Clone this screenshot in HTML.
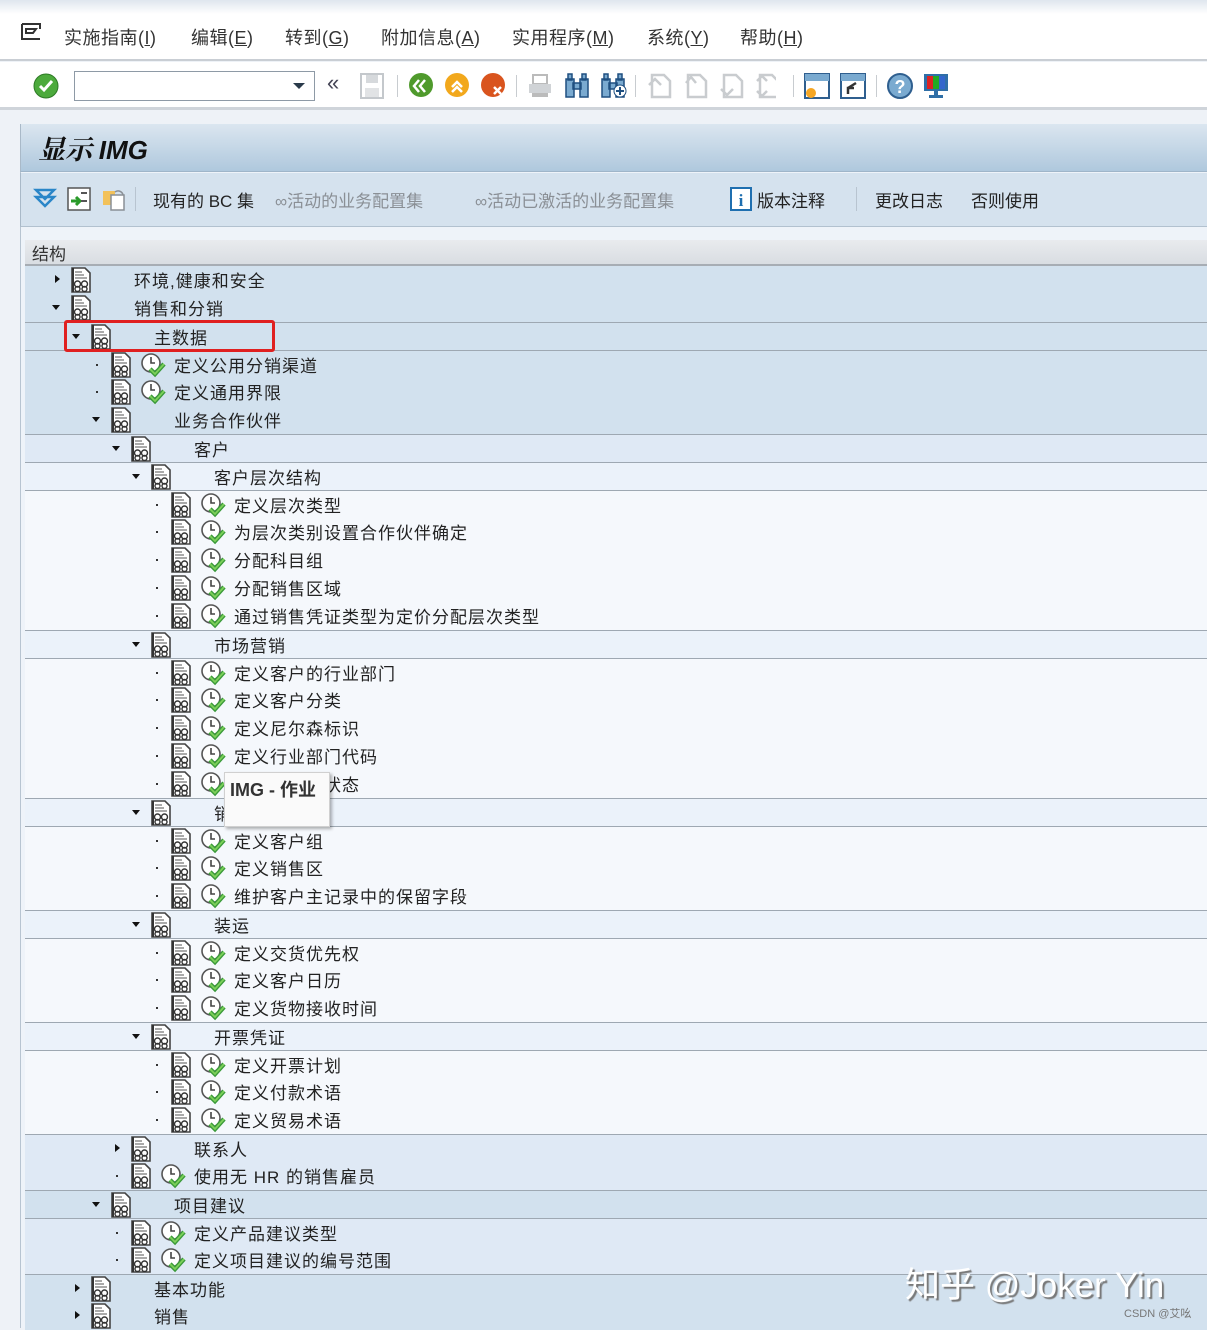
<!DOCTYPE html>
<html><head><meta charset="utf-8">
<style>
*{margin:0;padding:0;box-sizing:border-box}
body{width:1207px;height:1328px;overflow:hidden;background:#eef2f7;font-family:"Liberation Sans","Noto Sans CJK SC",sans-serif;position:relative;color:#222}
.abs{position:absolute}
#menu{left:0;top:0;width:1207px;height:61px;background:linear-gradient(#dfe6ee 0,#fff 14px,#fff 100%);border-bottom:2px solid #c9ced4}
#menu span{position:absolute;top:24px;font-size:18px;color:#333;letter-spacing:0.5px}
#tb{left:0;top:62px;width:1207px;height:48px;background:#fff;border-bottom:3px solid #cfd4da}
#panel{left:20px;top:124px;width:1187px;height:1204px;background:#eef3f9;border-left:1px solid #b7c4d1;border-top:1px solid #b7c4d1}
#title{left:20px;top:124px;width:1187px;height:48px;background:linear-gradient(#dbe6f0,#afc8dd);border-bottom:1px solid #9fb5c9;border-left:1px solid #a9b9c8}
#title span{position:absolute;left:17px;top:4px;font-size:27px;font-style:italic;font-weight:bold;color:#111;font-family:"Liberation Serif","Noto Serif CJK SC",serif}
#title b{font-family:"Liberation Sans",sans-serif;font-size:26px}
#act{left:20px;top:173px;width:1187px;height:54px;background:#d5e2ee;border-bottom:1px solid #b2c1cf;border-left:1px solid #a9b9c8}
#act span{position:absolute;top:14px;font-size:17px;color:#222}
#act .g{color:#8a8f95}
#hdr{left:25px;top:240px;width:1182px;height:26px;background:linear-gradient(#e9ebee,#d9dde2);border-bottom:2px solid #a7adb4}
#hdr span{position:absolute;left:7px;top:0px;font-size:17px;color:#333}
.r{position:absolute;left:25px;width:1182px;height:28px}
.r.bt{border-top:1px solid #9ea8b2}
.d0,.d1,.d2{background:#d2e1ee}.d3{background:#dfe9f5}.d4{background:#ebf2fa}.d5{background:#f5f8fc}
.r .x{position:absolute;top:1px;font-size:17px;color:#222;letter-spacing:1px;white-space:nowrap}
.r svg{position:absolute}
.tri{position:absolute;width:0;height:0}
.e{border-left:4px solid transparent;border-right:4px solid transparent;border-top:5px solid #111;top:11px}
.c{border-top:4px solid transparent;border-bottom:4px solid transparent;border-left:5px solid #111;top:9px}
.dot{position:absolute;width:2px;height:2px;background:#333;top:13px}
</style></head><body>
<svg width="0" height="0" style="position:absolute">
<defs>
<symbol id="doc" viewBox="0 0 24 26"><path d="M2 1h13l5 5v19H2z" fill="#fff" stroke="#444" stroke-width="1.6"/><path d="M5 5h7M5 8h9M5 11h12" stroke="#777" stroke-width="1.2"/><rect x="2" y="1" width="2" height="24" fill="#333"/><circle cx="7.5" cy="17" r="3" fill="none" stroke="#333" stroke-width="1.4"/><circle cx="14.5" cy="17" r="3" fill="none" stroke="#333" stroke-width="1.4"/><circle cx="7.5" cy="22" r="2.5" fill="none" stroke="#333" stroke-width="1.4"/><circle cx="14.5" cy="22" r="2.5" fill="none" stroke="#333" stroke-width="1.4"/></symbol>
<symbol id="clk" viewBox="0 0 26 26"><circle cx="11" cy="11" r="9" fill="#fff" stroke="#555" stroke-width="1.6"/><path d="M11 5v6h4" fill="none" stroke="#444" stroke-width="1.6"/><path d="M10 17l5 5 9-10" fill="none" stroke="#3a9a3a" stroke-width="4.5"/><path d="M10 17l5 5 9-10" fill="none" stroke="#7ed05a" stroke-width="1.8"/></symbol>
</defs></svg>

<div id="menu" class="abs">
<svg style="position:absolute;left:20px;top:22px" width="24" height="20"><path d="M2 2h18v5M2 2v15h18M6 7h10l-3 4H6z" fill="none" stroke="#333" stroke-width="2"/></svg>
<span style="left:64px">实施指南(<u>I</u>)</span>
<span style="left:191px">编辑(<u>E</u>)</span>
<span style="left:285px">转到(<u>G</u>)</span>
<span style="left:381px">附加信息(<u>A</u>)</span>
<span style="left:512px">实用程序(<u>M</u>)</span>
<span style="left:647px">系统(<u>Y</u>)</span>
<span style="left:740px">帮助(<u>H</u>)</span>
</div>

<div id="tb" class="abs">
<svg style="position:absolute;left:32px;top:10px" width="28" height="28"><circle cx="14" cy="14" r="12" fill="#4caa3c" stroke="#2d7a25"/><path d="M8 14l4 4 8-9" fill="none" stroke="#fff" stroke-width="3"/></svg>
<div style="position:absolute;left:74px;top:9px;width:241px;height:30px;border:1px solid #8e9aa6;background:#fff"><div class="tri e" style="left:218px;top:11px;border-left-width:6px;border-right-width:6px;border-top-width:6px;border-top-color:#2a3a4a"></div></div>
<span style="position:absolute;left:327px;top:8px;font-size:22px;color:#445">«</span>
<svg style="position:absolute;left:359px;top:10px" width="28" height="28"><rect x="2" y="2" width="22" height="24" fill="none" stroke="#c4c8cc" stroke-width="2"/><rect x="7" y="3" width="12" height="8" fill="#d6d9dc"/><rect x="6" y="16" width="14" height="9" fill="#e1e3e5"/></svg>
<div style="position:absolute;left:397px;top:13px;width:1px;height:22px;background:#c8ccd0"></div>
<svg style="position:absolute;left:407px;top:9px" width="30" height="30"><circle cx="14" cy="14" r="12" fill="#4f9a2c"/><path d="M18 9l-5 6 5 6M12 9l-5 6 5 6" fill="none" stroke="#fff" stroke-width="2.5"/></svg>
<svg style="position:absolute;left:443px;top:9px" width="30" height="30"><circle cx="14" cy="14" r="12" fill="#f2a81c"/><path d="M9 16l5-5 5 5M9 21l5-5 5 5" fill="none" stroke="#fff" stroke-width="2.5"/></svg>
<svg style="position:absolute;left:479px;top:9px" width="30" height="30"><circle cx="14" cy="14" r="12" fill="#d9541e"/><path d="M15 16l7 7M22 16l-7 7" stroke="#fff" stroke-width="2.5"/></svg>
<div style="position:absolute;left:516px;top:13px;width:1px;height:22px;background:#c8ccd0"></div>
<svg style="position:absolute;left:526px;top:10px" width="28" height="28"><rect x="7" y="3" width="14" height="9" fill="none" stroke="#bbb" stroke-width="2"/><rect x="3" y="12" width="22" height="9" fill="#d0d3d6"/><rect x="6" y="21" width="16" height="4" fill="#bbb"/></svg>
<svg style="position:absolute;left:563px;top:9px" width="28" height="30"><path d="M3 8h8v18H3zM17 8h8v18h-8zM5 3h4v6H5zM19 3h4v6h-4zM10 12h8v6h-8z" fill="#7aaad0" stroke="#1f4f80" stroke-width="1.5"/></svg>
<svg style="position:absolute;left:599px;top:9px" width="28" height="30"><path d="M3 8h8v18H3zM17 8h8v18h-8zM5 3h4v6H5zM19 3h4v6h-4zM10 12h8v6h-8z" fill="#7aaad0" stroke="#1f4f80" stroke-width="1.5"/><circle cx="21" cy="20" r="6" fill="#fff" stroke="#1f4f80"/><path d="M21 16v8M17 20h8" stroke="#1f4f80" stroke-width="2"/></svg>
<div style="position:absolute;left:635px;top:13px;width:1px;height:22px;background:#c8ccd0"></div>
<svg style="position:absolute;left:646px;top:9px" width="130" height="30"><g fill="none" stroke="#c9cccf" stroke-width="2.5"><path d="M6 4h12l6 6v16H6zM3 14l6-6 6 6"/><path d="M42 4h12l6 6v16H42zM40 12l5-6 5 6"/><path d="M78 4h12l6 6v16H78zM75 18l6 6 6-6"/><path d="M114 4h12l6 6v16h-18zM111 10l5-5 5 5M111 20l5 5 5-5"/></g></svg>
<div style="position:absolute;left:793px;top:13px;width:1px;height:22px;background:#c8ccd0"></div>
<svg style="position:absolute;left:803px;top:10px" width="28" height="28"><rect x="2" y="2" width="24" height="24" fill="#fff" stroke="#2f5f8f" stroke-width="2"/><rect x="2" y="2" width="24" height="7" fill="#7aaad0"/><circle cx="8" cy="21" r="5" fill="#f5a623"/></svg>
<svg style="position:absolute;left:839px;top:10px" width="28" height="28"><rect x="2" y="2" width="24" height="24" fill="#fff" stroke="#2f5f8f" stroke-width="2"/><rect x="2" y="2" width="24" height="7" fill="#7aaad0"/><path d="M9 22v-6h6M9 16l8-5" stroke="#333" stroke-width="2.5" fill="none"/></svg>
<div style="position:absolute;left:876px;top:13px;width:1px;height:22px;background:#c8ccd0"></div>
<svg style="position:absolute;left:886px;top:9px" width="30" height="30"><circle cx="14" cy="15" r="12" fill="#7aaad0" stroke="#2f5f8f" stroke-width="2"/><text x="14" y="22" font-size="18" font-weight="bold" fill="#fff" text-anchor="middle" font-family="Liberation Sans">?</text></svg>
<svg style="position:absolute;left:922px;top:9px" width="30" height="30"><rect x="2" y="3" width="24" height="17" fill="#2f6fa7"/><rect x="5" y="5" width="6" height="13" fill="#d22"/><rect x="11" y="5" width="6" height="13" fill="#2a2"/><rect x="17" y="5" width="6" height="13" fill="#36c"/><rect x="12" y="20" width="4" height="4" fill="#2f6fa7"/><rect x="7" y="24" width="14" height="3" fill="#2f6fa7"/></svg>
</div>

<div id="panel" class="abs"></div>
<div id="title" class="abs"><span>显示 <b>IMG</b></span></div>
<div id="act" class="abs">
<svg style="position:absolute;left:12px;top:13px" width="26" height="26"><path d="M3 4h18l-9 9z M3 11h18l-9 9z" fill="none" stroke="#2a86c8" stroke-width="2.5"/></svg>
<svg style="position:absolute;left:45px;top:13px" width="26" height="26"><rect x="2" y="2" width="22" height="22" fill="#fff" stroke="#555" stroke-width="1.5"/><path d="M5 15h8M10 11l4 4-4 4" stroke="#2a9a2a" stroke-width="3" fill="none"/><path d="M15 7h6M15 15h6" stroke="#555" stroke-width="2"/></svg>
<svg style="position:absolute;left:80px;top:13px" width="26" height="26"><rect x="2" y="5" width="12" height="14" fill="#f2c15a"/><rect x="10" y="9" width="13" height="15" fill="#fff" stroke="#8a8f95" stroke-width="1.5"/><path d="M14 6a5 5 0 0 1 8 3" fill="none" stroke="#8a8f95" stroke-width="1.5"/></svg>
<div style="position:absolute;left:114px;top:14px;width:1px;height:24px;background:#b8c4d0"></div>
<span style="left:132px">现有的 BC 集</span>
<span class="g" style="left:254px">&#8734;活动的业务配置集</span>
<span class="g" style="left:454px">&#8734;活动已激活的业务配置集</span>
<svg style="position:absolute;left:709px;top:14px" width="22" height="24"><rect x="1" y="1" width="20" height="22" fill="#fff" stroke="#1f6fb0" stroke-width="2"/><text x="11" y="19" font-size="17" font-weight="bold" fill="#1f6fb0" text-anchor="middle" font-family="Liberation Serif">i</text></svg>
<span style="left:736px">版本注释</span>
<div style="position:absolute;left:835px;top:14px;width:1px;height:24px;background:#b8c4d0"></div>
<span style="left:854px">更改日志</span>
<span style="left:950px">否则使用</span>
</div>
<div id="hdr" class="abs"><span>结构</span></div>

<div class="r d0" style="top:266px"><div class="tri c" style="left:30px"></div><svg style="left:45px;top:1px" width="24" height="26"><use href="#doc"/></svg><span class="x" style="left:109px">环境,健康和安全</span></div>
<div class="r d0" style="top:294px"><div class="tri e" style="left:27px"></div><svg style="left:45px;top:1px" width="24" height="26"><use href="#doc"/></svg><span class="x" style="left:109px">销售和分销</span></div>
<div class="r d1 bt" style="top:322px"><div class="tri e" style="left:47px"></div><svg style="left:65px;top:1px" width="24" height="26"><use href="#doc"/></svg><span class="x" style="left:129px">主数据</span></div>
<div class="r d2 bt" style="top:350px"><div class="dot" style="left:71px"></div><svg style="left:85px;top:1px" width="24" height="26"><use href="#doc"/></svg><svg style="left:115px;top:1px" width="26" height="26"><use href="#clk"/></svg><span class="x" style="left:149px">定义公用分销渠道</span></div>
<div class="r d2" style="top:378px"><div class="dot" style="left:71px"></div><svg style="left:85px;top:1px" width="24" height="26"><use href="#doc"/></svg><svg style="left:115px;top:1px" width="26" height="26"><use href="#clk"/></svg><span class="x" style="left:149px">定义通用界限</span></div>
<div class="r d2" style="top:406px"><div class="tri e" style="left:67px"></div><svg style="left:85px;top:1px" width="24" height="26"><use href="#doc"/></svg><span class="x" style="left:149px">业务合作伙伴</span></div>
<div class="r d3 bt" style="top:434px"><div class="tri e" style="left:87px"></div><svg style="left:105px;top:1px" width="24" height="26"><use href="#doc"/></svg><span class="x" style="left:169px">客户</span></div>
<div class="r d4 bt" style="top:462px"><div class="tri e" style="left:107px"></div><svg style="left:125px;top:1px" width="24" height="26"><use href="#doc"/></svg><span class="x" style="left:189px">客户层次结构</span></div>
<div class="r d5 bt" style="top:490px"><div class="dot" style="left:131px"></div><svg style="left:145px;top:1px" width="24" height="26"><use href="#doc"/></svg><svg style="left:175px;top:1px" width="26" height="26"><use href="#clk"/></svg><span class="x" style="left:209px">定义层次类型</span></div>
<div class="r d5" style="top:518px"><div class="dot" style="left:131px"></div><svg style="left:145px;top:1px" width="24" height="26"><use href="#doc"/></svg><svg style="left:175px;top:1px" width="26" height="26"><use href="#clk"/></svg><span class="x" style="left:209px">为层次类别设置合作伙伴确定</span></div>
<div class="r d5" style="top:546px"><div class="dot" style="left:131px"></div><svg style="left:145px;top:1px" width="24" height="26"><use href="#doc"/></svg><svg style="left:175px;top:1px" width="26" height="26"><use href="#clk"/></svg><span class="x" style="left:209px">分配科目组</span></div>
<div class="r d5" style="top:574px"><div class="dot" style="left:131px"></div><svg style="left:145px;top:1px" width="24" height="26"><use href="#doc"/></svg><svg style="left:175px;top:1px" width="26" height="26"><use href="#clk"/></svg><span class="x" style="left:209px">分配销售区域</span></div>
<div class="r d5" style="top:602px"><div class="dot" style="left:131px"></div><svg style="left:145px;top:1px" width="24" height="26"><use href="#doc"/></svg><svg style="left:175px;top:1px" width="26" height="26"><use href="#clk"/></svg><span class="x" style="left:209px">通过销售凭证类型为定价分配层次类型</span></div>
<div class="r d4 bt" style="top:630px"><div class="tri e" style="left:107px"></div><svg style="left:125px;top:1px" width="24" height="26"><use href="#doc"/></svg><span class="x" style="left:189px">市场营销</span></div>
<div class="r d5 bt" style="top:658px"><div class="dot" style="left:131px"></div><svg style="left:145px;top:1px" width="24" height="26"><use href="#doc"/></svg><svg style="left:175px;top:1px" width="26" height="26"><use href="#clk"/></svg><span class="x" style="left:209px">定义客户的行业部门</span></div>
<div class="r d5" style="top:686px"><div class="dot" style="left:131px"></div><svg style="left:145px;top:1px" width="24" height="26"><use href="#doc"/></svg><svg style="left:175px;top:1px" width="26" height="26"><use href="#clk"/></svg><span class="x" style="left:209px">定义客户分类</span></div>
<div class="r d5" style="top:714px"><div class="dot" style="left:131px"></div><svg style="left:145px;top:1px" width="24" height="26"><use href="#doc"/></svg><svg style="left:175px;top:1px" width="26" height="26"><use href="#clk"/></svg><span class="x" style="left:209px">定义尼尔森标识</span></div>
<div class="r d5" style="top:742px"><div class="dot" style="left:131px"></div><svg style="left:145px;top:1px" width="24" height="26"><use href="#doc"/></svg><svg style="left:175px;top:1px" width="26" height="26"><use href="#clk"/></svg><span class="x" style="left:209px">定义行业部门代码</span></div>
<div class="r d5" style="top:770px"><div class="dot" style="left:131px"></div><svg style="left:145px;top:1px" width="24" height="26"><use href="#doc"/></svg><svg style="left:175px;top:1px" width="26" height="26"><use href="#clk"/></svg><span class="x" style="left:209px">定义客户的状态</span></div>
<div class="r d4 bt" style="top:798px"><div class="tri e" style="left:107px"></div><svg style="left:125px;top:1px" width="24" height="26"><use href="#doc"/></svg><span class="x" style="left:189px">销售</span></div>
<div class="r d5 bt" style="top:826px"><div class="dot" style="left:131px"></div><svg style="left:145px;top:1px" width="24" height="26"><use href="#doc"/></svg><svg style="left:175px;top:1px" width="26" height="26"><use href="#clk"/></svg><span class="x" style="left:209px">定义客户组</span></div>
<div class="r d5" style="top:854px"><div class="dot" style="left:131px"></div><svg style="left:145px;top:1px" width="24" height="26"><use href="#doc"/></svg><svg style="left:175px;top:1px" width="26" height="26"><use href="#clk"/></svg><span class="x" style="left:209px">定义销售区</span></div>
<div class="r d5" style="top:882px"><div class="dot" style="left:131px"></div><svg style="left:145px;top:1px" width="24" height="26"><use href="#doc"/></svg><svg style="left:175px;top:1px" width="26" height="26"><use href="#clk"/></svg><span class="x" style="left:209px">维护客户主记录中的保留字段</span></div>
<div class="r d4 bt" style="top:910px"><div class="tri e" style="left:107px"></div><svg style="left:125px;top:1px" width="24" height="26"><use href="#doc"/></svg><span class="x" style="left:189px">装运</span></div>
<div class="r d5 bt" style="top:938px"><div class="dot" style="left:131px"></div><svg style="left:145px;top:1px" width="24" height="26"><use href="#doc"/></svg><svg style="left:175px;top:1px" width="26" height="26"><use href="#clk"/></svg><span class="x" style="left:209px">定义交货优先权</span></div>
<div class="r d5" style="top:966px"><div class="dot" style="left:131px"></div><svg style="left:145px;top:1px" width="24" height="26"><use href="#doc"/></svg><svg style="left:175px;top:1px" width="26" height="26"><use href="#clk"/></svg><span class="x" style="left:209px">定义客户日历</span></div>
<div class="r d5" style="top:994px"><div class="dot" style="left:131px"></div><svg style="left:145px;top:1px" width="24" height="26"><use href="#doc"/></svg><svg style="left:175px;top:1px" width="26" height="26"><use href="#clk"/></svg><span class="x" style="left:209px">定义货物接收时间</span></div>
<div class="r d4 bt" style="top:1022px"><div class="tri e" style="left:107px"></div><svg style="left:125px;top:1px" width="24" height="26"><use href="#doc"/></svg><span class="x" style="left:189px">开票凭证</span></div>
<div class="r d5 bt" style="top:1050px"><div class="dot" style="left:131px"></div><svg style="left:145px;top:1px" width="24" height="26"><use href="#doc"/></svg><svg style="left:175px;top:1px" width="26" height="26"><use href="#clk"/></svg><span class="x" style="left:209px">定义开票计划</span></div>
<div class="r d5" style="top:1078px"><div class="dot" style="left:131px"></div><svg style="left:145px;top:1px" width="24" height="26"><use href="#doc"/></svg><svg style="left:175px;top:1px" width="26" height="26"><use href="#clk"/></svg><span class="x" style="left:209px">定义付款术语</span></div>
<div class="r d5" style="top:1106px"><div class="dot" style="left:131px"></div><svg style="left:145px;top:1px" width="24" height="26"><use href="#doc"/></svg><svg style="left:175px;top:1px" width="26" height="26"><use href="#clk"/></svg><span class="x" style="left:209px">定义贸易术语</span></div>
<div class="r d3 bt" style="top:1134px"><div class="tri c" style="left:90px"></div><svg style="left:105px;top:1px" width="24" height="26"><use href="#doc"/></svg><span class="x" style="left:169px">联系人</span></div>
<div class="r d3" style="top:1162px"><div class="dot" style="left:91px"></div><svg style="left:105px;top:1px" width="24" height="26"><use href="#doc"/></svg><svg style="left:135px;top:1px" width="26" height="26"><use href="#clk"/></svg><span class="x" style="left:169px">使用无 HR 的销售雇员</span></div>
<div class="r d2 bt" style="top:1190px"><div class="tri e" style="left:67px"></div><svg style="left:85px;top:1px" width="24" height="26"><use href="#doc"/></svg><span class="x" style="left:149px">项目建议</span></div>
<div class="r d3 bt" style="top:1218px"><div class="dot" style="left:91px"></div><svg style="left:105px;top:1px" width="24" height="26"><use href="#doc"/></svg><svg style="left:135px;top:1px" width="26" height="26"><use href="#clk"/></svg><span class="x" style="left:169px">定义产品建议类型</span></div>
<div class="r d3" style="top:1246px"><div class="dot" style="left:91px"></div><svg style="left:105px;top:1px" width="24" height="26"><use href="#doc"/></svg><svg style="left:135px;top:1px" width="26" height="26"><use href="#clk"/></svg><span class="x" style="left:169px">定义项目建议的编号范围</span></div>
<div class="r d1 bt" style="top:1274px"><div class="tri c" style="left:50px"></div><svg style="left:65px;top:1px" width="24" height="26"><use href="#doc"/></svg><span class="x" style="left:129px">基本功能</span></div>
<div class="r d1" style="top:1302px"><div class="tri c" style="left:50px"></div><svg style="left:65px;top:1px" width="24" height="26"><use href="#doc"/></svg><span class="x" style="left:129px">销售</span></div>

<div class="abs" style="left:64px;top:320px;width:211px;height:32px;border:3px solid #e02020;border-radius:3px"></div>

<div class="abs" style="left:224px;top:772px;width:106px;height:55px;background:#fafafa;border:1px solid #d0d0d0;box-shadow:2px 2px 3px rgba(0,0,0,0.3)"><span style="position:absolute;left:5px;top:3px;font-size:18px;font-weight:bold;color:#333;white-space:nowrap">IMG - 作业</span></div>

<div class="abs" style="left:905px;top:1257px;font-size:35px;color:#fff;text-shadow:2px 2px 1px #777;white-space:nowrap">知乎 @Joker Yin</div>
<div class="abs" style="left:1124px;top:1305px;font-size:11px;color:#777;white-space:nowrap">CSDN @艾吆</div>
</body></html>
